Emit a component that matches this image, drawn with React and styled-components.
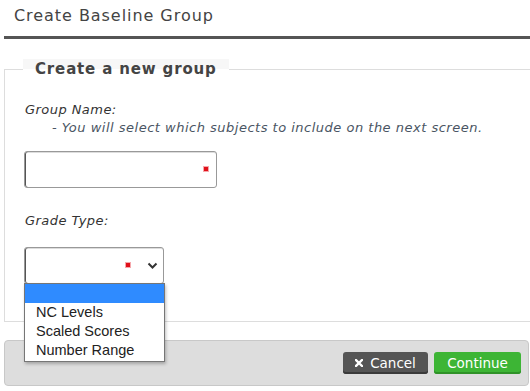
import React from "react";
import styled, { createGlobalStyle } from "styled-components";

const Global = createGlobalStyle`
  html, body {
    margin: 0;
    padding: 0;
    background: #fff;
  }
  body {
    font-family: "DejaVu Sans", Verdana, sans-serif;
    color: #444;
    overflow: hidden;
  }
`;

const Page = styled.div`
  width: 530px;
`;

const Header = styled.div`
  height: 39px;
  box-sizing: border-box;
  margin-left: 4px;
  padding: 0 0 5px 10px;
  display: flex;
  align-items: center;
  font-size: 16px;
  letter-spacing: 0.95px;
  color: #444;
  border-bottom: 3px solid #555;
`;

const Fieldset = styled.fieldset`
  margin: 20px 0 0 4px;
  padding: 22px 20px 37px 19px;
  border: 1px solid #ddd;
  border-right: none;
  min-width: 0;
`;

const Legend = styled.legend`
  margin-left: -1px;
  padding: 0 12px;
  font-size: 15px;
  font-weight: bold;
  letter-spacing: 0.85px;
  line-height: 20px;
  color: #444;
  background: linear-gradient(to bottom, #f7f7f7 0 10px, transparent 10px);
`;

const Label = styled.div`
  font-size: 13px;
  line-height: 18px;
  font-style: italic;
  letter-spacing: 0.45px;
  color: #333;
  margin: ${(p) => p.$top || 0}px 0 0 1px;
`;

const Hint = styled.div`
  font-size: 13px;
  line-height: 18px;
  font-style: italic;
  letter-spacing: 0.5px;
  color: #4a5563;
  padding-left: 28px;
`;

const Control = styled.div`
  position: relative;
  width: ${(p) => p.$width}px;
  height: 37px;
  margin-top: ${(p) => p.$top}px;
  box-sizing: border-box;
  border: 1px solid #999;
  border-radius: 3px;
  box-shadow: inset 1px 0 0 #555, inset 0 1px 0 #ddd;
  background: #fff;
`;

const Required = styled.span`
  position: absolute;
  top: 15px;
  right: ${(p) => p.$right}px;
  width: 4px;
  height: 4px;
  background: #e0101a;
  box-shadow: 0 0 0 1px #f6a8ac;
`;

const Chevron = styled.svg`
  position: absolute;
  right: 5px;
  top: 14px;
`;

const Dropdown = styled.ul`
  position: absolute;
  top: 35px;
  left: -1px;
  width: 141px;
  box-sizing: border-box;
  margin: 0;
  padding: 0 0 1px;
  list-style: none;
  background: #fff;
  border: 1px solid #767676;
  box-shadow: 1px 2px 3px rgba(0, 0, 0, 0.25);
  font-family: "Liberation Sans", Arial, sans-serif;
  font-size: 14.5px;
  color: #222;
  z-index: 5;
`;

const Option = styled.li`
  height: 19px;
  line-height: 19px;
  padding-left: 11px;
  background: ${(p) => (p.$active ? "#2f8bff" : "transparent")};
  color: ${(p) => (p.$active ? "#fff" : "#222")};
`;

const Footer = styled.div`
  margin: 18px 1px 0 4px;
  height: 46px;
  box-sizing: border-box;
  background: #ddd;
  border: 1px solid #c8c8c8;
  border-radius: 4px;
  display: flex;
  align-items: center;
  justify-content: flex-end;
  gap: 6px;
  padding-right: 7px;
`;

const Button = styled.button`
  height: 22px;
  width: ${(p) => p.$width}px;
  box-sizing: border-box;
  border: none;
  border-radius: 3px;
  background: ${(p) => p.$bg};
  box-shadow: inset 0 -2px 0 ${(p) => p.$edge};
  color: #fff;
  font-family: "DejaVu Sans", Verdana, sans-serif;
  font-size: 13.5px;
  display: flex;
  align-items: center;
  justify-content: center;
  gap: 7px;
  padding: 0 0 1px;
`;

const XIcon = () => (
  <svg width="8" height="8" viewBox="0 0 8 8">
    <path d="M1 1 L7 7 M7 1 L1 7" stroke="#fff" strokeWidth="2.4" strokeLinecap="square" />
  </svg>
);

export default function App() {
  return (
    <Page>
      <Global />
      <Header>Create Baseline Group</Header>
      <Fieldset>
        <Legend>Create a new group</Legend>
        <Label>Group Name:</Label>
        <Hint>- You will select which subjects to include on the next screen.</Hint>
        <Control $width={193} $top={14}>
          <Required $right={8} />
        </Control>
        <Label $top={24}>Grade Type:</Label>
        <Control $width={140} $top={17}>
          <Required $right={33} />
          <Chevron width="11" height="7" viewBox="0 0 11 7">
            <path d="M1.5 1.5 L5.5 5.5 L9.5 1.5" fill="none" stroke="#333" strokeWidth="2" />
          </Chevron>
          <Dropdown>
            <Option $active>&nbsp;</Option>
            <Option>NC Levels</Option>
            <Option>Scaled Scores</Option>
            <Option>Number Range</Option>
          </Dropdown>
        </Control>
      </Fieldset>
      <Footer>
        <Button $width={85} $bg="#555" $edge="#3a3a3a">
          <XIcon />
          Cancel
        </Button>
        <Button $width={87} $bg="#3db535" $edge="#2f9228">
          Continue
        </Button>
      </Footer>
    </Page>
  );
}
